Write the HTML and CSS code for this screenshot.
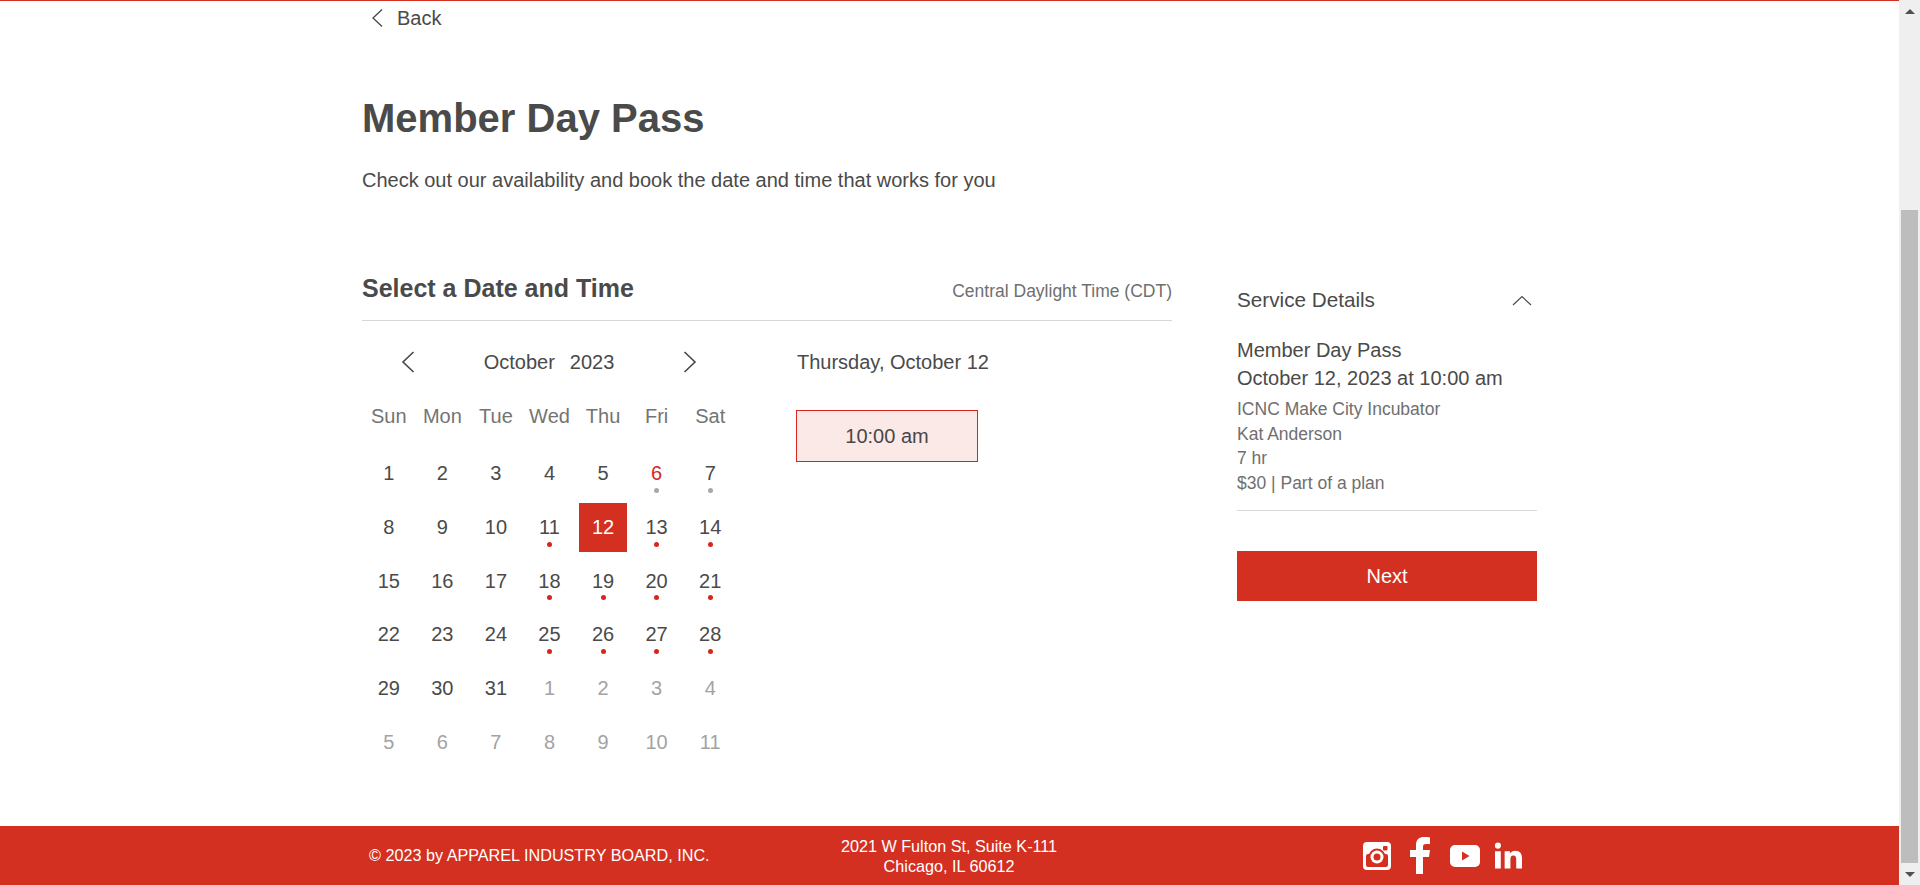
FILE: index.html
```html
<!DOCTYPE html>
<html lang="en">
<head>
<meta charset="utf-8">
<title>Member Day Pass</title>
<link rel="stylesheet" href="styles.css">
</head>
<body>
<div class="window">
  <div class="page">
    <main class="content">
      <a class="back">
        <svg class="back-icon" width="12" height="20" viewBox="0 0 12 20"><path d="M11 1.500 2 10l9 8.500" fill="none" stroke="#474747" stroke-width="1.300"/></svg>
        <span>Back</span>
      </a>
      <h1 class="title">Member Day Pass</h1>
      <p class="subtitle">Check out our availability and book the date and time that works for you</p>
      <div class="booking">
        <section class="picker">
          <header class="picker-head">
            <h2 class="picker-title">Select a Date and Time</h2>
            <span class="timezone">Central Daylight Time (CDT)</span>
          </header>
          <div class="picker-body">
            <div class="calendar">
              <div class="month-nav">
                <svg width="14" height="22" viewBox="0 0 14 22"><path d="M12.500 1 2 11l10.500 10" fill="none" stroke="#474747" stroke-width="1.600"/></svg>
                <span class="month-label"><span>October</span><span>2023</span></span>
                <svg width="14" height="22" viewBox="0 0 14 22"><path d="M1.500 1 12 11 1.500 21" fill="none" stroke="#474747" stroke-width="1.600"/></svg>
              </div>
              <div class="weekdays">
                <span>Sun</span><span>Mon</span><span>Tue</span><span>Wed</span><span>Thu</span><span>Fri</span><span>Sat</span>
              </div>
              <div class="days">
                <span class="day">1</span><span class="day">2</span><span class="day">3</span><span class="day">4</span><span class="day">5</span><span class="day red-text muted-dot">6</span><span class="day muted-dot">7</span>
                <span class="day">8</span><span class="day">9</span><span class="day">10</span><span class="day dot">11</span><span class="day selected">12</span><span class="day dot">13</span><span class="day dot">14</span>
                <span class="day">15</span><span class="day">16</span><span class="day">17</span><span class="day dot">18</span><span class="day dot">19</span><span class="day dot">20</span><span class="day dot">21</span>
                <span class="day">22</span><span class="day">23</span><span class="day">24</span><span class="day dot">25</span><span class="day dot">26</span><span class="day dot">27</span><span class="day dot">28</span>
                <span class="day">29</span><span class="day">30</span><span class="day">31</span><span class="day off">1</span><span class="day off">2</span><span class="day off">3</span><span class="day off">4</span>
                <span class="day off">5</span><span class="day off">6</span><span class="day off">7</span><span class="day off">8</span><span class="day off">9</span><span class="day off">10</span><span class="day off">11</span>
              </div>
            </div>
            <div class="slots">
              <div class="slots-date">Thursday, October 12</div>
              <button class="slot">10:00 am</button>
            </div>
          </div>
        </section>
        <aside class="details">
          <div class="details-head">
            <span>Service Details</span>
            <svg width="20" height="11" viewBox="0 0 20 11"><path d="M1 10 10 1.500l9 8.500" fill="none" stroke="#474747" stroke-width="1.100"/></svg>
          </div>
          <div class="details-main">
            <div>Member Day Pass</div>
            <div>October 12, 2023 at 10:00 am</div>
          </div>
          <div class="details-meta">
            <div>ICNC Make City Incubator</div>
            <div>Kat Anderson</div>
            <div>7 hr</div>
            <div>$30 | Part of a plan</div>
          </div>
          <button class="next">Next</button>
        </aside>
      </div>
    </main>
    <footer class="footer">
      <div class="copyright">© 2023 by APPAREL INDUSTRY BOARD, INC.</div>
      <div class="address">2021 W Fulton St, Suite K-111<br>Chicago, IL 60612</div>
      <div class="social">
        <svg class="ig" width="28" height="28" viewBox="0 0 28 28">
          <rect width="28" height="28" rx="4" fill="#fff"/>
          <rect x="3" y="12" width="22" height="13" rx="2" fill="#d43021"/>
          <circle cx="14" cy="15" r="8.500" fill="#d43021"/>
          <circle cx="14" cy="15" r="6.500" fill="#fff"/>
          <circle cx="14" cy="15" r="3.500" fill="#d43021"/>
          <rect x="20" y="4" width="4.500" height="4.500" rx="1" fill="#d43021"/>
        </svg>
        <svg class="fb" width="21" height="37" viewBox="0 0 21 37"><path fill="#fff" d="M6 37V20H0v-7h6V8c0-5.500 3.300-8 8-8 2.500 0 5 .2 6 .4V7h-4c-2.500 0-3 1.200-3 3v3h7l-1 7h-6v17z"/></svg>
        <svg class="yt" width="30" height="22" viewBox="0 0 30 22"><path fill="#fff" fill-rule="evenodd" d="M5 0h20a5 5 0 0 1 5 5v12a5 5 0 0 1-5 5H5a5 5 0 0 1-5-5V5a5 5 0 0 1 5-5zM12 6.500v9l7.500-4.500z"/></svg>
        <svg class="in" width="27" height="27" viewBox="0 0 28 27"><path fill="#fff" d="M0 9h6v18H0zM3 0a3.200 3.200 0 1 1 0 6.400A3.200 3.200 0 0 1 3 0zM10 9h5.500v2.500C16.500 9.800 18.500 8.500 21 8.500c5 0 7 3 7 8V27h-6V17.500c0-2.500-.8-4-3-4s-3 1.700-3 4V27h-6z"/></svg>
      </div>
    </footer>
  </div>
  <div class="scrollbar">
    <div class="scroll-btn"><span class="arrow-up"></span></div>
    <div class="track"><div class="thumb"></div></div>
    <div class="scroll-btn"><span class="arrow-down"></span></div>
  </div>
</div>
</body>
</html>
```

FILE: styles.css
```css
* { box-sizing: border-box; }
html, body { margin: 0; height: 100%; overflow: hidden; }
body { font-family: "Liberation Sans", Arial, sans-serif; color: #4a4a4a; background: #fff; }
.window { display: flex; height: 885px; }
.page { width: 1899px; display: flex; flex-direction: column; border-top: 1px solid #d43021; }
.content { flex: 1; padding-left: 362px; }
.back { display: flex; align-items: center; height: 34px; padding-left: 9px; font-size: 20px; gap: 14px; }
.title { margin: 60px 0 0; font-size: 40px; line-height: 46px; font-weight: 700; }
.subtitle { margin: 26px 0 0; font-size: 20px; line-height: 26px; }
.booking { display: flex; margin-top: 68px; }
.picker { width: 810px; }
.picker-head { display: flex; justify-content: space-between; align-items: center; height: 60px; border-bottom: 1px solid #d8d8d8; padding-bottom: 4px; }
.picker-title { margin: 0; font-size: 25px; font-weight: 700; }
.timezone { margin-top: 6px; font-size: 17.500px; color: #6f6f6f; }
.picker-body { display: flex; }
.calendar { width: 375px; }
.month-nav { display: flex; justify-content: space-between; align-items: center; height: 40px; margin-top: 21px; padding: 0 40px 0 39px; font-size: 20px; }
.month-label { display: flex; gap: 15px; }
.weekdays { display: grid; grid-template-columns: repeat(7, 1fr); margin-top: 18px; height: 32px; align-items: center; text-align: center; font-size: 20px; color: #747474; }
.days { display: grid; grid-template-columns: repeat(7, 1fr); grid-auto-rows: 53.7px; margin-top: 15px; }
.day { position: relative; display: flex; align-items: center; justify-content: center; font-size: 20px; }
.red-text { color: #d9261c; }
.off { color: #a3a3a3; }
.dot::after, .muted-dot::after { content: ""; position: absolute; left: 50%; top: 41px; width: 5px; height: 5px; margin-left: -2.500px; border-radius: 50%; background: #d9261c; }
.muted-dot::after { background: #a8a8a8; }
.selected { background: #d43021; color: #fff; margin: 2px 3px 2px; }
.slots { margin-left: 59px; }
.slots-date { margin-top: 28px; padding-left: 1px; font-size: 20px; line-height: 26px; }
.slot { display: block; width: 182px; height: 52px; margin-top: 35px; border: 1px solid #d9261c; background: #fbe9e8; font: 20px "Liberation Sans", Arial, sans-serif; color: #474747; }
.details { width: 300px; margin-left: 65px; }
.details-head { display: flex; justify-content: space-between; align-items: center; height: 40px; margin-top: 19px; padding-right: 5px; font-size: 20.700px; }
.details-main { margin-top: 16px; font-size: 20px; line-height: 28px; }
.details-meta { margin-top: 5px; padding-bottom: 15px; border-bottom: 1px solid #d8d8d8; font-size: 17.500px; line-height: 24.600px; color: #6f6f6f; }
.next { display: block; width: 100%; height: 50px; margin-top: 40px; border: 0; background: #d43021; color: #fff; font: 20px "Liberation Sans", Arial, sans-serif; }
.footer { display: flex; align-items: center; height: 59px; padding-left: 369px; background: #d43021; color: #fff; font-size: 16.200px; }
.copyright { width: 470px; white-space: nowrap; }
.address { width: 220px; text-align: center; line-height: 20px; white-space: nowrap; }
.social { display: flex; align-items: center; margin-left: 304px; }
.ig { margin-right: 19px; }
.fb { margin-right: 19px; }
.yt { margin-right: 15px; }
.scrollbar { width: 21px; display: flex; flex-direction: column; background: #efefef; border-left: 2px solid #efefef; border-right: 2px solid #efefef; }
.scroll-btn { height: 22px; display: flex; align-items: center; justify-content: center; }
.track { flex: 1; display: flex; flex-direction: column; justify-content: flex-end; }
.thumb { height: 653px; background: #bdbdbd; }
.arrow-up, .arrow-down { width: 0; height: 0; border-left: 5px solid transparent; border-right: 5px solid transparent; }
.arrow-up { border-bottom: 5px solid #505050; }
.arrow-down { border-top: 5px solid #505050; }
```
